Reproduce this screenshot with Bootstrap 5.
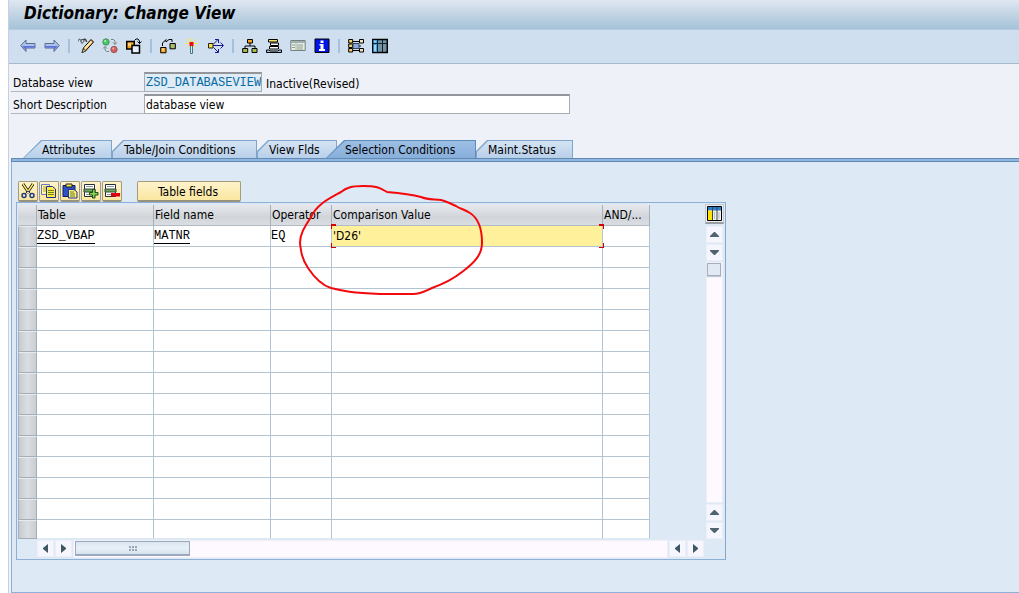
<!DOCTYPE html>
<html lang="en">
<head>
<meta charset="utf-8">
<meta name="viewport" content="width=device-width, initial-scale=1">
<title>Dictionary: Change View</title>
<link href="https://cdn.jsdelivr.net/npm/bootstrap@5.3.0/dist/css/bootstrap.min.css" rel="stylesheet">
<style>
  body { font: 12px/16px "DejaVu Sans Condensed", "DejaVu Sans", sans-serif; color: #000; background: #fff; }
  button { font: inherit; color: inherit; }
  .mono { font-family: "Liberation Mono", monospace; }
  .shell { border-left: 1px solid #c9cfe3; background: #eef1f7; min-height: 100vh; }

  .title-bar { height: 30px; padding-left: 15px; background: linear-gradient(#dfe7f1, #c2d4e4 50%, #a6c3da); border-bottom: 1px solid #b4cbe0; }
  .title-bar h1 { font-size: 17px; line-height: 26px; font-weight: 700; font-style: italic; }
  .tool-bar { height: 34px; padding: 0 0 2px 7px; background: #cfdfef; border-bottom: 1px solid #a3bacf; }
  .tool { width: 24px; height: 24px; padding: 0; border: 0; background: none; }
  .tool svg, .edit svg { display: block; margin: auto; }
  .sep { width: 2px; height: 14px; margin: 0 4px; background: #a5c0dc; }

  .fields { padding: 8px 0 0 2px; }
  .field { height: 22px; }
  .field label { width: 133px; height: 20px; padding-left: 2px; padding-top: 3px; border-bottom: 1px solid #b3b6ba; }
  .field input { height: 20px; padding: 0 1px; border: 1px solid #a9adb2; border-top: 2px solid #92969a; border-radius: 0; outline: 0; background: #fff; color: #000; }
  .field input.key { width: 118px; padding-right: 0; background: #dfebf5; color: #0a6aa6; }
  .field input.desc { flex: 0 1 426px; min-width: 0; }

  .tabs { margin-top: 24px; padding-left: 14px; height: 18px; }
  .tab { position: relative; z-index: 0; height: 18px; padding: 2px 0 0; border: 0; background: none; text-align: left; --cut: polygon(0 100%, 0 11px, 11px 0, 100% 0, 100% 100%); padding-left: 12px; }
  .tab { line-height: 17px; }
  .tab::before, .tab::after { content: ""; position: absolute; z-index: -1; clip-path: var(--cut); }
  .tab::before { inset: 0; background: #7fa5cb; }
  .tab::after { inset: 1px 1px 0 1px; background: linear-gradient(#d3e3f3, #b9d0ea); }
  .tab.slant { --cut: polygon(0 100%, 18px 0, 100% 0, 100% 100%); padding-left: 19px; }
  .tab.on { z-index: 1; margin-left: -11px; }
  .tab.on::before { background: #5f8dbb; }
  .tab.on::after { background: linear-gradient(#9dbfe4, #88aedb); }

  .panel { margin-left: 2px; border: 1px solid #8fb0d6; border-right: 0; background: #dde9f5; border-top: 0; padding: 0 0 32px 4px; }
  .panel-line { margin-left: 2px; height: 4px; background: #92b5df; border: 1px solid #5f8cb5; border-right: 0; }
  .edit-bar { padding: 19px 0 0 2px; gap: 1px; height: 40px; }
  .edit { height: 21px; padding: 0; border: 1px solid #a79a78; border-radius: 2px; background: linear-gradient(#fff3cb, #fae7a0); border-bottom: 2px solid #98917c; }
  .edit.ico { width: 20px; }
  .edit.wide { width: 104px; margin-left: 14px; padding: 2px 2px 0 0; line-height: 16px; }

  .grid-box { border: 1px solid #8fb0d6; border-color: #8fb0d6 #8aa5ca #8fb0d6 #8fb0d6; padding: 1px 1px 1px 1px; }
  .cells { table-layout: fixed; width: 632px; margin-top: 1px; border-collapse: separate; border-spacing: 0; }
  .cells th, .cells td { height: 21px; padding: 0 0 0 1px; border-right: 1px solid #b4c5d1; border-bottom: 1px solid #b4c5d1; background: #fff; line-height: 20px; white-space: nowrap; }
  .cells tbody td:not(.focus), .cells th { line-height: 20px; }
  .cells thead th { font-weight: 400; background: linear-gradient(#e6e8ec, #d1d5da 60%, #dadde2); border-color: #a9b5bf #9da9b3 #b0bac3 #a9b5bf; border-right-color: #a4b0ba; }
  .cells tbody td.mono { padding-left: 0; }
  .cells .pick { padding: 0; background: linear-gradient(90deg, #c7cbd0, #dadde1 50%, #cacdd2); border: 1px solid #a5adb6; border-top-color: #e8eaed; line-height: 16px; }
  .cells tbody tr:last-child > * { height: 19px; line-height: 16px; border-bottom-color: #dde9f5; }
  .cells tbody tr:last-child > .pick { border-bottom-color: #a5adb6; }
  .cells a { display: inline-block; height: 15px; line-height: 15px; color: #000; text-decoration: none; border-bottom: 1px solid #000; }
  .cells td.focus { position: relative; background: #fff09c; }
  .corner { position: absolute; width: 5px; height: 5px; border: 0 solid #d40000; }
  .tl { left: -1px; top: -2px; border-width: 2px 0 0 1px; }
  .tr { right: -2px; top: -2px; border-width: 2px 1px 0 0; }
  .bl { left: -1px; bottom: -2px; border-width: 0 0 1px 1px; }
  .br { right: -2px; bottom: -2px; border-width: 0 1px 1px 0; }

  .v-scroll { width: 19px; margin-left: 55px; gap: 1px; }
  .config { width: 19px; height: 20px; padding: 0; border: 1px solid #c5c9ce; border-bottom: 2px solid #9a9fa6; background: #e9edf1; margin-bottom: 1px; }
  .arrow { width: 17px; height: 17px; padding: 0 1px 1px 0; border: 1px solid #eceff9; background: #f6f7fe; flex: none; }
  .arrow svg { display: block; margin: auto; }
  .track { background: #fdf9fe; border: 1px solid #efeff8; }
  .v-scroll .track { width: 17px; }
  .v-thumb { width: 14px; height: 13px; border: 1px solid #a3afc0; background: #e1eaf4; box-shadow: 0 1px 1px #c4cad2; }
  .h-scroll { padding: 1px 20px 0 19px; gap: 1px; height: 19px; }
  .h-thumb { width: 115px; height: 15px; margin-left: 1px; border: 1px solid #9ca9bb; border-bottom-width: 2px; background: linear-gradient(#dbe6f1, #e8f0f8 50%, #d6e2ee); }
  .grip { width: 8px; height: 5px; background: repeating-linear-gradient(90deg, #98a6b5 0 2px, transparent 2px 3px); }
  .grip::before { content: ""; display: block; height: 1px; margin-top: 2px; background: #dfe9f3; }
  .pen-mark { position: absolute; left: 281px; top: -19px; pointer-events: none; }
</style>
</head>
<body>
<svg class="d-none">
  <symbol id="back" viewBox="0 0 16 16"><path d="M.7 7.500 6 2v3.500h9V10H6v3.500z" fill="#a9c4ea" stroke="#5c6d8c"/><path d="M2 8h12.500v1.500H6V12z" fill="#5a6fe0"/></symbol>
  <symbol id="up" viewBox="0 0 9 9"><path d="M0 7V6l4-4h1l4 4v1z" fill="#4f6470"/></symbol>
  <symbol id="down" viewBox="0 0 9 9"><path d="M0 2v1l4 4h1l4-4V2z" fill="#4f6470"/></symbol>
  <symbol id="left" viewBox="0 0 9 9"><path d="M7 0v9L2 5V4z" fill="#3f5763"/></symbol>
  <symbol id="right" viewBox="0 0 9 9"><path d="M2 0v9L7 5V4z" fill="#3f5763"/></symbol>
</svg>
<div class="shell ms-2">
  <header class="title-bar"><h1 class="m-0">Dictionary: Change View</h1></header>
  <nav class="tool-bar d-flex align-items-center" aria-label="Application toolbar">
    <button class="tool" aria-label="Back"><svg width="16" height="16"><use href="#back"/></svg></button>
    <button class="tool" aria-label="Forward"><svg width="16" height="16"><use href="#back" transform="matrix(-1 0 0 1 16 0)"/></svg></button>
    <span class="sep"></span>
    <button class="tool" aria-label="Display or change"><svg width="16" height="16"><path d="M0 3.500c0-3 3-3 3 0s3 1 3-1 3-2 2 1M3 2l4-1 2 3" fill="none" stroke="#333"/><path d="M4 14.500 5.500 10 13 1.500 15.500 4l-8 9z" fill="#f49a3a" stroke="#000"/><path d="m7 10.500 6.500-7" stroke="#ffe9b0" stroke-width="2"/><path d="m4 14.500 1.500-3.500 2.200 2z" fill="#fff" stroke="#443"/></svg></button>
    <button class="tool" aria-label="Active or inactive"><svg width="16" height="16"><circle cx="4" cy="4" r="3.200" fill="#3fcb60" stroke="#5a8a64"/><circle cx="3.200" cy="3" r="1" fill="#b4f4bd"/><circle cx="12" cy="11.500" r="3.200" fill="#d75d60" stroke="#8e6060"/><circle cx="11.300" cy="10.500" r="1" fill="#f6b0ae"/><path d="M9 1.500h2.500L13 3v3M11 4.500l2 2 2-2M7 13.500H4.500L3 12V9M1 10.500l2-2 2 2" fill="none" stroke="#76837a"/></svg></button>
    <button class="tool" aria-label="Other object"><svg width="16" height="16"><path d="M.7 3.500h7.500V11H.7z" fill="#f9a11b" stroke="#000" stroke-width="1.500"/><path d="M2 5h3v3H2z" fill="#ffd27a"/><path d="M6 7.500h7.500V15H6z" fill="#e7f0ff" stroke="#000" stroke-width="1.500"/><path d="M8.500 2.500 10 1h2l1.500 2v2.500M11.500 3.500l2 2 2-2" fill="none" stroke="#000"/></svg></button>
    <span class="sep"></span>
    <button class="tool" aria-label="Check"><svg width="16" height="16"><path d="M.7 9.500H6v5.300H.7z" fill="#f5a623" stroke="#000"/><path d="M2 10.500h2v2H2z" fill="#ffe0a0"/><path d="M10 5.500h5.300v5.300H10z" fill="#a9bd6a" stroke="#000"/><path d="M2.500 8V5l2-2h2M6 4l3-2.500h3V4M4.500 3l2-1.500" fill="none" stroke="#000"/></svg></button>
    <button class="tool" aria-label="Activate"><svg width="16" height="16"><path d="M7.500 0v5M1 5.500h13M2.500 1l9 9M12.500 1l-9 9" stroke="#f4e84e"/><path d="M6.500 7h2v8.500h-2z" fill="#c8f4f4" stroke="#467a80"/><path d="M5.500 4h4v4h-4z" fill="#e80c1a"/></svg></button>
    <button class="tool" aria-label="Where-used list"><svg width="16" height="16"><path d="M.5 5.500H5V10H.5z" fill="#f6e43c" stroke="#222"/><path d="M5 7.500h10M5.500 6 10 1.500M5.500 9.500 10 14M12.500 4.500l3 3-3 3M7 1.500h3.500V5M7 14.500h3.500V11" fill="none" stroke="#18188c"/></svg></button>
    <span class="sep"></span>
    <button class="tool" aria-label="Hierarchy"><svg width="16" height="16"><path d="M8 5v3M3 11V8h10v3" fill="none" stroke="#000"/><path d="M5.500 1.500h5v3.500h-5z" fill="#f5a623" stroke="#000"/><path d="M.7 10.500h5v4h-5zM10 10.500h5v4h-5z" fill="#a9bd4a" stroke="#000"/></svg></button>
    <button class="tool" aria-label="Append"><svg width="16" height="16"><path d="M2.500 1.500h9V4h-9z" fill="#f6e56a" stroke="#000"/><path d="M4.500 5h8v2.500h-8zM3.500 8.500h9v2.500h-9z" fill="#fff" stroke="#000"/><path d="M.5 14.500V12H3l1 1h8l1-1h2.500v2.500z" fill="#9ed2ec" stroke="#000"/></svg></button>
    <button class="tool" aria-label="Contents"><svg width="16" height="16"><path d="M.8 2.500h14.400v10H.8z" fill="#e6ebe5" stroke="#75817f"/><path d="M1 3h14v2H1z" fill="#9eb2b1"/><path d="M2 7h3M2 9.500h3M7 7h6M7 9h6M7 11h6" stroke="#8fa089"/><path d="M6 5v7" stroke="#a7b4b4"/></svg></button>
    <button class="tool" aria-label="Information"><svg width="16" height="16"><path d="M1 1h14v13.500H1z" fill="#0014e6" stroke="#000"/><path d="M6.500 2.500h3v2.500h-3zM5.500 6h4v5h1.500v2H5v-2h1.500V7.500h-1z" fill="#fff"/></svg></button>
    <span class="sep"></span>
    <button class="tool" aria-label="Join"><svg width="16" height="16"><path d="M3 3.500h10M3 8h10M3 12.500h10" stroke="#000"/><path d="M.7 1.500h4v3.500h-4zM.7 6h4v3.500h-4zM.7 10.500h4V14h-4z" fill="#f2ce74" stroke="#000"/><path d="M5 5.500h6v5H5z" fill="#8ba9dc" stroke="#345"/><path d="M11.500 1.500h4v3.500h-4zM11.500 10.500h4V14h-4z" fill="#efe6be" stroke="#000"/></svg></button>
    <button class="tool" aria-label="Technical settings"><svg width="16" height="16"><path d="M.8 1.500h14.500v13H.8z" fill="#7392a4" stroke="#000" stroke-width="1.500"/><path d="M1.500 2h4v12h-4z" fill="#39a8ef"/><path d="M5.500 2v12M10.500 2v12M1 5.500h14" stroke="#10222c"/><path d="M3 3v1.500M3 7v6" stroke="#fff"/></svg></button>
  </nav>

  <form class="fields">
    <div class="field d-flex"><label for="view">Database view</label><input id="view" class="key mono" value="ZSD_DATABASEVIEW" readonly><span class="ps-1 pt-1">Inactive(Revised)</span></div>
    <div class="field d-flex"><label for="desc">Short Description</label><input id="desc" class="desc" value="database view"></div>
  </form>

  <div class="tabs d-flex" role="tablist">
    <button class="tab slant" role="tab" style="width:89px">Attributes</button>
    <button class="tab" role="tab" style="width:145px">Table/Join Conditions</button>
    <button class="tab" role="tab" style="width:80px">View Flds</button>
    <button class="tab slant on" role="tab" aria-selected="true" style="width:150px">Selection Conditions</button>
    <button class="tab" role="tab" style="width:97px">Maint.Status</button>
  </div>
  <div class="panel-line"></div>
  <main class="panel">
    <div class="edit-bar d-flex">
      <button class="edit ico" aria-label="Cut"><svg width="16" height="16"><path d="m3 1 6 9M13 1 7 10" stroke="#000" stroke-width="3"/><path d="m3 1 6 9M13 1 7 10" stroke="#f8e96c" stroke-width="1.500"/><circle cx="4" cy="12.500" r="2" fill="none" stroke="#223a88" stroke-width="1.500"/><circle cx="12" cy="12.500" r="2" fill="none" stroke="#223a88" stroke-width="1.500"/><path d="m5 11 3-3 3 3" fill="none" stroke="#223a88"/></svg></button>
      <button class="edit ico" aria-label="Copy"><svg width="16" height="16"><path d="M.5 1.500h8v10h-8z" fill="#fdf6a8" stroke="#6a7ac0"/><path d="M2 4h4M2 6h4M2 8h4" stroke="#b8a13c"/><path d="M5.500 3.500h6L14.500 6v8.500h-9z" fill="#fdee3a" stroke="#1c2fa0"/><path d="M7 7.500h6M7 9.500h6M7 11.500h6" stroke="#6d7a2a"/></svg></button>
      <button class="edit ico" aria-label="Paste"><svg width="16" height="16"><path d="M1 2.500h12v11H1z" fill="#2c52c4" stroke="#0a1c6a"/><path d="M4 1h6v3H4z" fill="#f5e452" stroke="#222"/><path d="M6.500 6.500H12L15 9v6H6.500z" fill="#fdf270" stroke="#1c2fa0"/><path d="M8 9h4M8 11h5M8 13h5" stroke="#6d7a2a"/></svg></button>
      <button class="edit ico" aria-label="Insert row"><svg width="16" height="16"><path d="M1.500 1.500h10v12h-10z" fill="#fff" stroke="#222c3c"/><path d="M3 3.500h7M3 11.500h5" stroke="#8794a2"/><path d="M1 6h11v3H1z" fill="#6eaa50" stroke="#344"/><path d="M9.500 6.500h2.500V9.500h3V12h-3v3H9.500v-3h-3V9.500h3z" fill="#8bd254" stroke="#1b4b12"/></svg></button>
      <button class="edit ico" aria-label="Delete row"><svg width="16" height="16"><path d="M1.500 1.500h10v12h-10z" fill="#fff" stroke="#222c3c"/><path d="M3 3.500h7M3 11.500h5" stroke="#8794a2"/><path d="M1 6h11v3H1z" fill="#6eaa50" stroke="#344"/><path d="M7 10h9v3.500H7z" fill="#e00010"/></svg></button>
      <button class="edit wide">Table fields</button>
    </div>

    <section class="grid-box d-inline-block position-relative align-top">
      <div class="d-flex">
        <table class="cells">
          <colgroup><col style="width:19px"><col style="width:117px"><col style="width:117px"><col style="width:61px"><col style="width:271px"><col style="width:47px"></colgroup>
          <thead><tr><th aria-label="Select row"></th><th>Table</th><th>Field name</th><th>Operator</th><th>Comparison Value</th><th>AND/...</th></tr></thead>
          <tbody id="rows">
            <tr><th class="pick"></th><td class="mono"><a href="#">ZSD_VBAP</a></td><td class="mono"><a href="#">MATNR</a></td><td class="mono">EQ</td><td class="focus">'D26'<i class="corner tl"></i><i class="corner tr"></i><i class="corner bl"></i><i class="corner br"></i></td><td></td></tr>
          </tbody>
        </table>
        <div class="v-scroll d-flex flex-column align-items-center">
          <button class="config" aria-label="Table settings"><svg class="d-block" width="17" height="17"><path d="M1.500 1.500h14v14h-14z" fill="#f2f2ee" stroke="#000"/><path d="M2 2h13v3.500H2z" fill="#2a7cd0"/><path d="M2 5.500h4.500V15H2z" fill="#ffe500"/><path d="M6.500 2v13M11 2v13" stroke="#444"/><path d="M8.500 7v7M13 7v7" stroke="#b6bcc6"/></svg></button>
          <button class="arrow" aria-label="First row"><svg width="9" height="9"><use href="#up"/></svg></button>
          <button class="arrow" aria-label="Next row"><svg width="9" height="9"><use href="#down"/></svg></button>
          <div class="track flex-grow-1"><div class="v-thumb"></div></div>
          <button class="arrow" aria-label="Previous page"><svg width="9" height="9"><use href="#up"/></svg></button>
          <button class="arrow" aria-label="Next page"><svg width="9" height="9"><use href="#down"/></svg></button>
        </div>
      </div>
      <div class="h-scroll d-flex">
        <button class="arrow" aria-label="First column"><svg width="9" height="9"><use href="#left"/></svg></button>
        <button class="arrow" aria-label="Next column"><svg width="9" height="9"><use href="#right"/></svg></button>
        <div class="track flex-grow-1"><div class="h-thumb d-flex align-items-center justify-content-center"><span class="grip"></span></div></div>
        <button class="arrow" aria-label="Previous page of columns"><svg width="9" height="9"><use href="#left"/></svg></button>
        <button class="arrow" aria-label="Last column"><svg width="9" height="9"><use href="#right"/></svg></button>
      </div>
      <svg class="pen-mark" width="186" height="112" viewBox="298 184 186 112"><path d="M387 192C380 188 378 186 363 186C351 186 346 188 341 192C330 198 317 204 311 217C304 228 300 234 300 243C301 252 302 259 308 268C314 277 321 285 331 288C343 291 352 293 380 294H413C422 294 425 291 432 288C443 284 452 280 462 272C474 263 482 255 482 243C482 227 478 218 470 213C464 209 460 209 456 206C447 202 446 201 441 200C434 199 428 200 421 197C410 194 399 193 387 192Z" fill="none" stroke="#f4080c" stroke-width="2"/></svg>
    </section>
  </main>
</div>
<script>
  const rows = document.getElementById('rows');
  for (let i = 0; i < 14; i++) {
    rows.insertAdjacentHTML('beforeend', '<tr><th class="pick"></th>' + '<td></td>'.repeat(5) + '</tr>');
  }
</script>
<script src="https://cdn.jsdelivr.net/npm/bootstrap@5.3.0/dist/js/bootstrap.bundle.min.js"></script>
</body>
</html>
